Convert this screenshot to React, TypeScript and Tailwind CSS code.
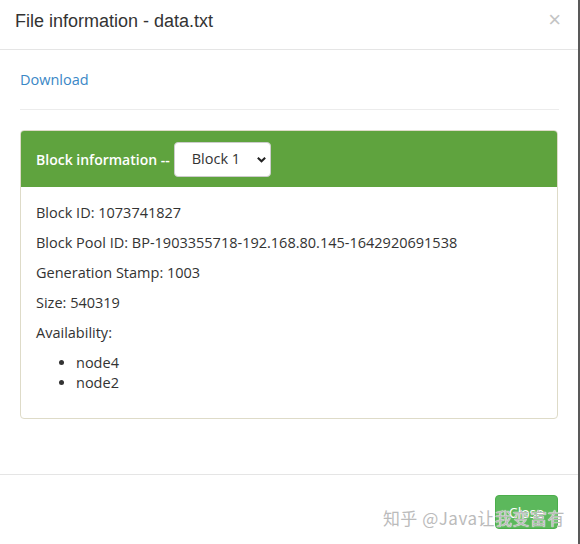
import React from "react";

export default function App() {
  return (
    <div className="flex w-[580px] h-[544px] overflow-hidden bg-[#5b5b5b]" style={{ fontFamily: '"Open Sans", "Noto Sans", sans-serif' }}>
      <div className="w-[578px] h-[544px] bg-white flex flex-col shrink-0">
        <div className="h-[50px] border-b border-[#e5e5e5] flex items-center justify-between pl-[15px] pr-[17px]">
          <div className="text-[18px] text-[#333] leading-none pb-[8px]" style={{ fontFamily: '"Liberation Sans", Arial, sans-serif' }}>File information - data.txt</div>
          <div className="text-[22px] leading-none text-[#c4c4c4] pb-[10px]" style={{ fontFamily: '"Liberation Sans", Arial, sans-serif' }}>×</div>
        </div>
        <div className="px-[20px] pt-[20px]">
          <div className="text-[14.5px] text-[#3a87c6] leading-[20px]">Download</div>
          <div className="mt-[19px] border-t border-[#ececec] w-[539px]"></div>
          <div className="mt-[20px] w-[538px] border border-[#dedbc8] rounded-[4px] overflow-hidden">
            <div className="h-[56px] bg-[#5fa33e] flex items-center pl-[15px]">
              <span className="text-white text-[14px] font-semibold">Block information --</span>
              <div className="ml-[4px] w-[97px] h-[35px] bg-white rounded-[4px] border border-[#ccc] flex items-center pl-[17px] pr-[3px] justify-between">
                <span className="text-[14.5px] text-[#333]">Block 1</span>
                <svg width="11" height="11" viewBox="0 0 12 12"><path d="M2 4l4 4 4-4" fill="none" stroke="#222" strokeWidth="2.2" /></svg>
              </div>
            </div>
            <div className="pl-[15px] pt-[16px] pb-[25px] text-[14.5px] text-[#333] leading-[20px]">
              <div>Block ID: 1073741827</div>
              <div className="mt-[10px]">Block Pool ID: BP-1903355718-192.168.80.145-1642920691538</div>
              <div className="mt-[10px]">Generation Stamp: 1003</div>
              <div className="mt-[10px]">Size: 540319</div>
              <div className="mt-[10px]">Availability:</div>
              <ul className="mt-[10px] list-disc pl-[40px]">
                <li>node4</li>
                <li>node2</li>
              </ul>
            </div>
          </div>
        </div>
        <div className="mt-[55px] border-t border-[#e5e5e5] flex justify-end pr-[20px] pt-[20px] relative">
          <div className="w-[63px] h-[34px] bg-[#5cb85c] rounded-[4px] border border-[#4cae4c] flex items-center justify-center text-white text-[14px]">Close</div>
          <div className="absolute right-[13px] top-[30px] text-[17px] text-[#bbbbbb] tracking-[0.5px]" style={{ fontFamily: '"Noto Sans CJK SC", sans-serif', textShadow: '0 0 1px #fff, 0 0 1px #fff' }}>知乎 @Java让我变富有</div>
        </div>
      </div>
      <div className="flex-1 bg-[#595959]"></div>
    </div>
  );
}
